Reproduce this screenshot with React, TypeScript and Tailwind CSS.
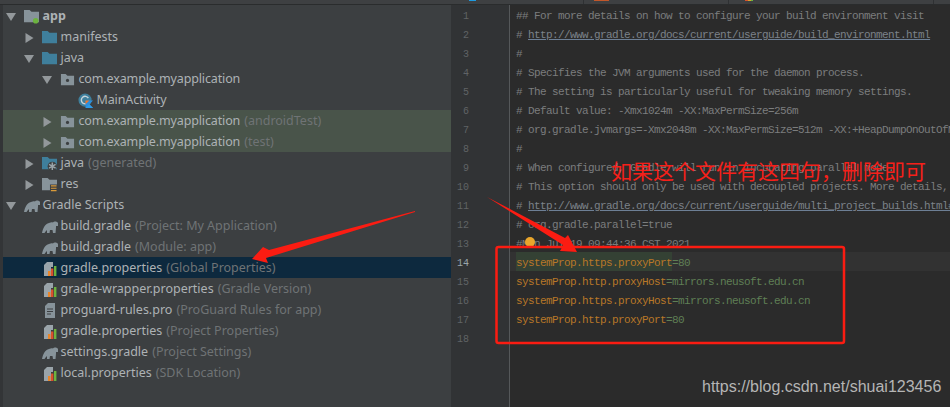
import React from 'react';

type Row = {
  indent: number;
  arrow?: 'open' | 'closed';
  icon: string;
  name: string;
  hint?: string;
  bg?: string;
  bold?: boolean;
  tight?: boolean;
};

const rows: Row[] = [
  { indent: 0, arrow: 'open', icon: 'module', name: 'app', bold: true },
  { indent: 1, arrow: 'closed', icon: 'folder', name: 'manifests' },
  { indent: 1, arrow: 'open', icon: 'folder', name: 'java' },
  { indent: 2, arrow: 'open', icon: 'package', name: 'com.example.myapplication', tight: true },
  { indent: 3, icon: 'kotlin', name: 'MainActivity', tight: true },
  { indent: 2, arrow: 'closed', icon: 'package', name: 'com.example.myapplication', hint: '(androidTest)', bg: 'bg-[#49544a]', tight: true },
  { indent: 2, arrow: 'closed', icon: 'package', name: 'com.example.myapplication', hint: '(test)', bg: 'bg-[#49544a]', tight: true },
  { indent: 1, arrow: 'closed', icon: 'generated', name: 'java', hint: '(generated)' },
  { indent: 1, arrow: 'closed', icon: 'res', name: 'res' },
  { indent: 0, arrow: 'open', icon: 'gradle', name: 'Gradle Scripts' },
  { indent: 1, icon: 'gradle', name: 'build.gradle', hint: '(Project: My Application)' },
  { indent: 1, icon: 'gradle', name: 'build.gradle', hint: '(Module: app)' },
  { indent: 1, icon: 'props', name: 'gradle.properties', hint: '(Global Properties)', bg: 'bg-[#0d293e]' },
  { indent: 1, icon: 'props', name: 'gradle-wrapper.properties', hint: '(Gradle Version)' },
  { indent: 1, icon: 'text', name: 'proguard-rules.pro', hint: '(ProGuard Rules for app)' },
  { indent: 1, icon: 'props', name: 'gradle.properties', hint: '(Project Properties)' },
  { indent: 1, icon: 'gradle', name: 'settings.gradle', hint: '(Project Settings)' },
  { indent: 1, icon: 'props', name: 'local.properties', hint: '(SDK Location)' },
];

const FOLDER = 'M0 1h6l2 2h8v11H0z';
const ELEPHANT = 'M0 12C1 7 3 3 7 2c2-1 3-1 4-.5C12 0 15 0 16 2v3h-2v1.500L13.500 12H11l-.5-3H8l-.5 3H5V9c-1 1-2 2-2.500 3z';

function TreeIcon({ kind }: { kind: string }) {
  if (kind === 'module') {
    return (
      <svg width="15" height="15" viewBox="0 0 16 16">
        <path d={FOLDER} fill="#87939a" />
        <circle cx="12.500" cy="12.500" r="3" fill="#6cb33f" />
      </svg>
    );
  }
  if (kind === 'folder') {
    return (
      <svg width="15" height="15" viewBox="0 0 16 16">
        <path d={FOLDER} fill="#3f7f9c" />
      </svg>
    );
  }
  if (kind === 'package') {
    return (
      <svg width="15" height="15" viewBox="0 0 16 16">
        <path d="M1 2h5l2 2h7v10H1z" fill="#87939a" />
        <circle cx="8" cy="9" r="1.700" fill="#3c3f41" />
      </svg>
    );
  }
  if (kind === 'kotlin') {
    return (
      <svg width="16" height="16" viewBox="0 0 17 17">
        <circle cx="7.500" cy="7.500" r="7" fill="#3f7f9c" />
        <path d="M11 5.500a4 4 0 1 0 0 4" fill="none" stroke="#c7d4da" strokeWidth="1.500" />
        <path d="M8 8h8l-4 4 4 4H8z" fill="#2b8fe0" />
        <path d="M8 8h4l-4 4z" fill="#f0762a" />
        <path d="M8 16l4-4 4 4z" fill="#2f9be6" />
      </svg>
    );
  }
  if (kind === 'generated') {
    return (
      <svg width="15" height="15" viewBox="0 0 16 16">
        <path d={FOLDER} fill="#3f7f9c" />
        <circle cx="11" cy="11" r="5" fill="#3c3f41" />
        <path d="M11 7v8M7.500 9l7 4M14.500 9l-7 4" stroke="#9aa4aa" strokeWidth="1.600" />
      </svg>
    );
  }
  if (kind === 'res') {
    return (
      <svg width="15" height="15" viewBox="0 0 16 16">
        <path d={FOLDER} fill="#87939a" />
        <rect x="8.500" y="8" width="7.500" height="8" fill="#3c3f41" />
        <path d="M9.500 9.500h6M9.500 12h6M9.500 14.500h6" stroke="#d99a3a" strokeWidth="1.200" />
      </svg>
    );
  }
  if (kind === 'gradle') {
    return (
      <svg width="16" height="12" viewBox="0 0 16 12">
        <path d={ELEPHANT} fill="#87939a" />
      </svg>
    );
  }
  if (kind === 'props') {
    return (
      <svg className="ml-[1px]" width="14" height="15" viewBox="0 0 14 15">
        <path d="M1 4l3-3h4v14H1z" fill="#9aa4aa" />
        <path d="M8 1h2v5H8z" fill="#9aa4aa" />
        <rect x="5" y="10" width="2.400" height="5" fill="#e8862a" />
        <rect x="8" y="7.500" width="2.400" height="7.500" fill="#d9512c" />
        <rect x="11" y="5" width="2.400" height="10" fill="#6cb33f" />
      </svg>
    );
  }
  return (
    <svg className="ml-[1px]" width="14" height="15" viewBox="0 0 14 15">
      <path d="M2 3l3-3h7v15H2z" fill="#87939a" />
      <path d="M4 6h6M4 8.500h6M4 11h4" stroke="#3c3f41" strokeWidth="1" />
    </svg>
  );
}

function TreeArrow({ dir }: { dir: 'open' | 'closed' }) {
  return (
    <svg width="10" height="10" viewBox="0 0 10 10">
      {dir === 'open' ? <path d="M0 1h10L5 9z" fill="#93989b" /> : <path d="M1.500 0l8 5-8 5z" fill="#93989b" />}
    </svg>
  );
}

function TreeRow({ row }: { row: Row }) {
  // each tree level moves 18px right
  const left = 2.5 + row.indent * 18;
  return (
    <div className={`flex h-[21px] items-center whitespace-nowrap pt-[2px] ${row.bg || ''}`} style={{ paddingLeft: left }}>
      <div className="flex w-[18px] shrink-0 items-center">{row.arrow && <TreeArrow dir={row.arrow} />}</div>
      <div className="flex w-[19px] shrink-0 items-center">
        <TreeIcon kind={row.icon} />
      </div>
      <span className={`text-[#adb2b5] ${row.bold ? 'font-bold' : ''} ${row.tight ? 'tracking-[-0.13px]' : ''}`}>{row.name}</span>
      {row.hint && <span className="ml-[4px] text-[#6f7375]">{row.hint}</span>}
    </div>
  );
}

function Url({ children }: { children: string }) {
  return <span className="text-[#7c8289] underline decoration-[#6d7f95]">{children}</span>;
}

function Prop({ name, value }: { name: string; value: string }) {
  return (
    <>
      <span className="text-[#b87728]">{name}</span>
      <span className="text-[#5f7f55]">={value}</span>
    </>
  );
}

const lines: React.ReactNode[] = [
  '## For more details on how to configure your build environment visit',
  <># <Url>http://www.gradle.org/docs/current/userguide/build_environment.html</Url></>,
  '#',
  '# Specifies the JVM arguments used for the daemon process.',
  '# The setting is particularly useful for tweaking memory settings.',
  '# Default value: -Xmx1024m -XX:MaxPermSize=256m',
  '# org.gradle.jvmargs=-Xmx2048m -XX:MaxPermSize=512m -XX:+HeapDumpOnOutOfMemoryError',
  '#',
  '# When configured, Gradle will run in incubating parallel mode.',
  '# This option should only be used with decoupled projects. More details, visit',
  <># <Url>http://www.gradle.org/docs/current/userguide/multi_project_builds.html#sec</Url></>,
  '# org.gradle.parallel=true',
  '#Mon Jul 19 09:44:36 CST 2021',
  <><span className="inline-block h-[19px] bg-[#344134] text-[#b87728]">systemProp.https.proxyPort</span><span className="text-[#5f7f55]">=80</span></>,
  <Prop name="systemProp.http.proxyHost" value="mirrors.neusoft.edu.cn" />,
  <Prop name="systemProp.https.proxyHost" value="mirrors.neusoft.edu.cn" />,
  <Prop name="systemProp.http.proxyPort" value="80" />,
  '',
];

export default function App() {
  return (
    <div className="relative flex h-[407px] w-[950px] flex-col overflow-hidden bg-[#3c3f41] font-['Noto_Sans',sans-serif] text-[12.5px]">
      {/* Cropped tab bar */}
      <div className="flex h-[5px] shrink-0 border-b border-[#2a2c2d] bg-[#3e4042]">
        <div className="w-[469px]" />
        <div className="h-[1px] w-[7px] bg-[#1e9be0]" />
        <div className="w-[108px] border-r border-[#2f3133]" />
        <div className="w-[10px]" />
        <div className="h-[1px] w-[15px] bg-[#c2572a]" />
        <div className="w-[120px] border-r border-[#2f3133]" />
        <div className="w-[16px]" />
        <div className="h-[1px] w-[3px] bg-[#d9512c]" />
        <div className="h-[1px] w-[3px] bg-[#d9a52c]" />
        <div className="h-[1px] w-[2px] bg-[#6cb33f]" />
        <div className="w-[181px] border-r border-[#2f3133]" />
      </div>

      <div className="flex min-h-0 flex-1">
        <div className="w-[3px] shrink-0 bg-[#333537]" />

        {/* Project tree */}
        <div className="w-[448px] shrink-0 overflow-hidden">
          {rows.map((row, i) => (
            <TreeRow key={i} row={row} />
          ))}
        </div>

        {/* Gutter */}
        <div className="w-[59px] shrink-0 border-r border-[#55585a] bg-[#313335] pr-[40px] text-right font-['Liberation_Mono',monospace] text-[10px] text-[#606366]">
          {lines.map((_, i) => (
            <div key={i} className={`h-[19px] leading-[23px] ${i === 13 ? 'text-[#9aa5ab]' : ''}`}>
              {i + 1}
            </div>
          ))}
        </div>

        {/* Editor */}
        <div className="min-w-0 flex-1 overflow-hidden bg-[#2b2b2b] font-['Liberation_Mono',monospace] text-[11px] tracking-[-0.6px] text-[#7b7d7e]">
          {lines.map((line, i) => (
            <div key={i} className={`h-[19px] whitespace-pre pl-[6px] leading-[23px] ${i === 13 ? 'bg-[#323232]' : ''}`}>
              {line}
            </div>
          ))}
        </div>
      </div>

      {/* Screenshot annotations */}
      <svg className="absolute inset-0" width="950" height="407" viewBox="0 0 950 407">
        <path d="M415 211L269 250l-6-3-11 12 16 4-2-5L415 212z" fill="#fb1c12" />
        <path d="M487 197l78 41 3-3 9 17-17-1 3-6z" fill="#fb1c12" />
        <circle cx="530" cy="242" r="5" fill="#e9a62c" />
        <rect x="496.500" y="247" width="347.500" height="96" rx="2" fill="none" stroke="#fb1c12" strokeWidth="2.500" />
      </svg>
      <div className="absolute left-[611px] top-[157px] font-['Noto_Sans_CJK_SC',sans-serif] text-[21px] leading-[26px] text-[#f5201a]">
        如果这个文件有这四句，删除即可
      </div>
      <div className="absolute left-[702px] top-[377px] font-['Liberation_Sans',sans-serif] text-[16px] leading-[20px] text-[#b5b5b5]">
        https://blog.csdn.net/shuai123456
      </div>
    </div>
  );
}
